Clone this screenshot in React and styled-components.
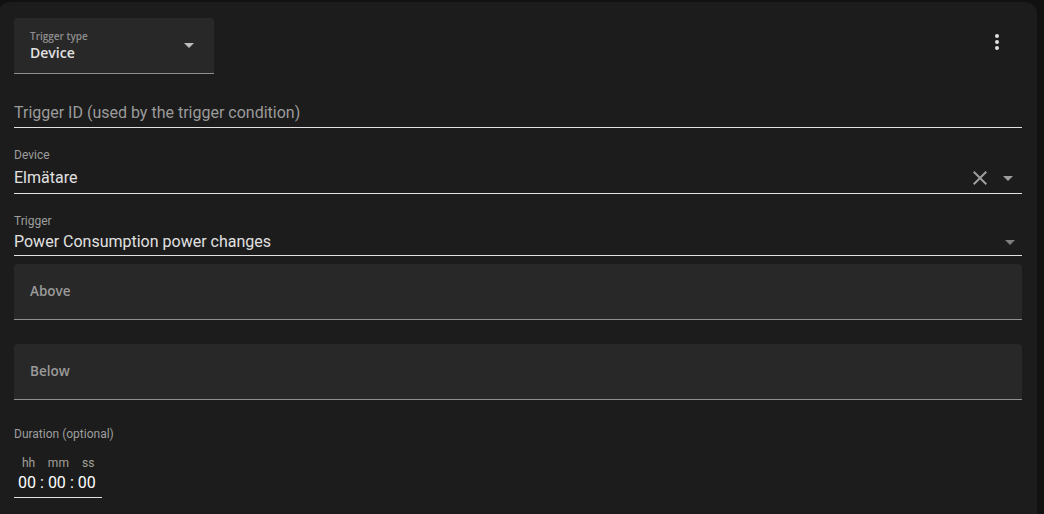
import React from 'react'
import styled, { createGlobalStyle } from 'styled-components'

const GlobalStyle = createGlobalStyle`
  html, body {
    margin: 0;
    padding: 0;
    background: #111111;
    font-family: Roboto, "Liberation Sans", sans-serif;
  }
`

const Page = styled.div`
  width: 1044px;
  height: 514px;
  overflow: hidden;
  padding: 2px 7px 0 0;
  box-sizing: border-box;
`

const Card = styled.div`
  margin-left: -2px;
  background: #1c1c1c;
  border-radius: 12px;
  padding: 16px 15px 30px 16px;
  min-height: 560px;
  box-sizing: border-box;
`

const HeaderRow = styled.div`
  display: flex;
  justify-content: space-between;
  align-items: flex-start;
`

const FilledSelect = styled.div`
  width: ${p => p.$width || '200px'};
  height: 56px;
  box-sizing: border-box;
  background: #282828;
  border-radius: 4px 4px 0 0;
  border-bottom: 1px solid #8f8f8f;
  padding: 0 16px;
  display: flex;
  align-items: center;
  justify-content: space-between;
`

const SelectText = styled.div`
  display: flex;
  flex-direction: column;
  padding-top: 2px;
`

const FloatLabel = styled.span`
  font-family: "Open Sans", sans-serif;
  font-size: 10px;
  font-weight: 600;
  color: #8e8e8e;
  line-height: 13px;
`

const SelectValue = styled.span`
  font-family: "Open Sans", sans-serif;
  font-size: 14px;
  font-weight: 600;
  color: #e1e1e1;
  line-height: 20px;
`

const Caret = styled.span`
  width: 0;
  height: 0;
  border-left: 5px solid transparent;
  border-right: 5px solid transparent;
  border-top: 5px solid ${p => p.$color || '#9e9e9e'};
  margin-right: ${p => p.$mr || '0'};
`

const IconButton = styled.button`
  width: 48px;
  height: 48px;
  margin-right: 1px;
  background: none;
  border: none;
  padding: 0;
  display: flex;
  align-items: center;
  justify-content: center;
  color: #e1e1e1;
`

const LineField = styled.div`
  margin-top: ${p => p.$mt || '20px'};
  border-bottom: 1px solid #e1e1e1;
  padding-bottom: ${p => p.$pb || '4px'};
`

const SmallLabel = styled.div`
  font-size: 12px;
  line-height: 14px;
  color: #9e9e9e;
  margin-bottom: ${p => p.$mb || '5px'};
`

const ValueRow = styled.div`
  display: flex;
  align-items: center;
  justify-content: space-between;
  height: 20px;
`

const Value = styled.span`
  font-size: 16px;
  line-height: 20px;
  color: ${p => (p.$placeholder ? '#9b9b9b' : '#e1e1e1')};
`

const Actions = styled.div`
  display: flex;
  align-items: center;
  gap: 16px;
`

const NumberBox = styled(FilledSelect)`
  width: 100%;
  margin-top: ${p => p.$mt};
  justify-content: flex-start;
`

const BoxLabel = styled.span`
  font-family: "Open Sans", sans-serif;
  font-size: 13.5px;
  font-weight: 600;
  color: #9a9a9a;
  margin-top: -1px;
`

const Duration = styled.div`
  margin-top: 27px;
`

const TimeInput = styled.div`
  display: inline-flex;
  align-items: flex-end;
  padding: 0 6px 4px 4px;
  border-bottom: 1px solid #e1e1e1;
`

const TimeUnit = styled.div`
  display: flex;
  flex-direction: column;
  align-items: center;
  width: 18px;
`

const UnitLabel = styled.span`
  font-size: 12px;
  line-height: 14px;
  color: #a3a09a;
  margin-bottom: 3px;
  padding-left: 3px;
`

const Digits = styled.span`
  font-size: 16px;
  line-height: 20px;
  color: #ffffff;
`

const Colon = styled.span`
  font-size: 16px;
  line-height: 20px;
  color: #ffffff;
  padding: 0 4px;
`

const DotsIcon = () => (
  <svg width="24" height="24" viewBox="0 0 24 24" fill="currentColor">
    <path d="M12,16A2,2 0 0,1 14,18A2,2 0 0,1 12,20A2,2 0 0,1 10,18A2,2 0 0,1 12,16M12,10A2,2 0 0,1 14,12A2,2 0 0,1 12,14A2,2 0 0,1 10,12A2,2 0 0,1 12,10M12,4A2,2 0 0,1 14,6A2,2 0 0,1 12,8A2,2 0 0,1 10,6A2,2 0 0,1 12,4Z" />
  </svg>
)

const CloseIcon = () => (
  <svg width="24" height="24" viewBox="0 0 24 24" fill="#9e9e9e" style={{ margin: '0 -5px' }}>
    <path d="M19,6.41L17.59,5L12,10.59L6.41,5L5,6.41L10.59,12L5,17.59L6.41,19L12,13.41L17.59,19L19,17.59L13.41,12L19,6.41Z" />
  </svg>
)

const units = ['hh', 'mm', 'ss']

export default function App() {
  return (
    <>
      <GlobalStyle />
      <Page>
        <Card>
          <HeaderRow>
            <FilledSelect>
              <SelectText>
                <FloatLabel>Trigger type</FloatLabel>
                <SelectValue>Device</SelectValue>
              </SelectText>
              <Caret $color="#bdbdbd" $mr="4px" />
            </FilledSelect>
            <IconButton aria-label="menu">
              <DotsIcon />
            </IconButton>
          </HeaderRow>

          <LineField $mt="29px" $pb="4px">
            <ValueRow>
              <Value $placeholder>Trigger ID (used by the trigger condition)</Value>
            </ValueRow>
          </LineField>

          <LineField $mt="20px" $pb="5px">
            <SmallLabel $mb="6px">Device</SmallLabel>
            <ValueRow>
              <Value>Elmätare</Value>
              <Actions>
                <CloseIcon />
                <Caret $mr="9px" />
              </Actions>
            </ValueRow>
          </LineField>

          <LineField $mt="20px" $pb="3px">
            <SmallLabel $mb="4px">Trigger</SmallLabel>
            <ValueRow>
              <Value>Power Consumption power changes</Value>
              <Caret $color="#7e7e7e" $mr="7px" />
            </ValueRow>
          </LineField>

          <NumberBox $mt="8px">
            <BoxLabel>Above</BoxLabel>
          </NumberBox>
          <NumberBox $mt="24px">
            <BoxLabel>Below</BoxLabel>
          </NumberBox>

          <Duration>
            <SmallLabel $mb="11px">Duration (optional)</SmallLabel>
            <TimeInput>
              {units.map((u, i) => (
                <React.Fragment key={u}>
                  {i > 0 && <Colon>:</Colon>}
                  <TimeUnit>
                    <UnitLabel>{u}</UnitLabel>
                    <Digits>00</Digits>
                  </TimeUnit>
                </React.Fragment>
              ))}
            </TimeInput>
          </Duration>
        </Card>
      </Page>
    </>
  )
}
